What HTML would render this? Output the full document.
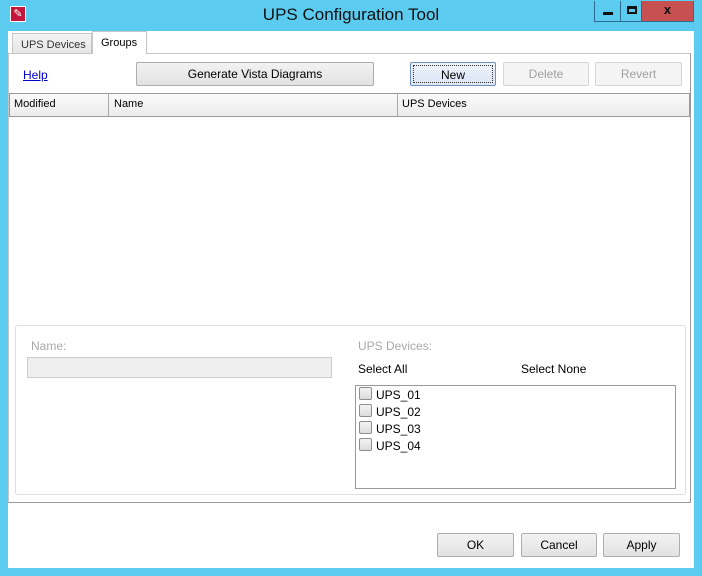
<!DOCTYPE html><html><head><style>
*{box-sizing:border-box;margin:0;padding:0}
body{width:702px;height:576px;background:#5ccbf0;font-family:"Liberation Sans",sans-serif;font-size:12px;color:#000;position:relative;overflow:hidden}
.a{position:absolute}
.btn{position:absolute;border:1px solid #adadad;border-radius:2px;background:linear-gradient(#f2f2f2,#e2e2e2);text-align:center;line-height:22px;font-size:12px}
.dis{color:#a0a0a0;border-color:#d5d5d5;background:#f4f4f4}
.cb{position:absolute;width:13px;height:13px;border:1px solid #8e8e8e;border-radius:2px;background:linear-gradient(#f4f4f4,#dcdcdc)}
</style></head><body>
<div class="a" style="left:10px;top:6px;width:16px;height:16px;background:#c4163a;border:1px solid #fff;color:#fff;font-size:11px;line-height:14px;text-align:center">✎</div>
<div class="a" style="left:0;width:702px;top:5px;text-align:center;font-size:17px;color:#111">UPS Configuration Tool</div>
<div class="a" style="left:594px;top:1px;width:27px;height:21px;border:1px solid #2b6d8e;border-top:none"><div class="a" style="left:8px;top:11px;width:10px;height:3px;background:#111"></div></div>
<div class="a" style="left:620px;top:1px;width:22px;height:21px;border:1px solid #2b6d8e;border-top:none"><div class="a" style="left:6px;top:5px;width:10px;height:8px;border:2px solid #111;border-top-width:3px"></div></div>
<div class="a" style="left:641px;top:1px;width:53px;height:21px;background:#c75050;border:1px solid #2b6d8e;border-top:none;color:#111;font-weight:bold;text-align:center;font-size:13px;line-height:18px">x</div>
<div class="a" style="left:8px;top:31px;width:686px;height:537px;background:#fff"></div>
<div class="a" style="left:12px;top:33px;width:80px;height:21px;border:1px solid #c6c6c6;background:linear-gradient(#f4f4f4,#e6e6e6);font-size:11px;color:#333;padding:5px 0 0 8px">UPS Devices</div>
<div class="a" style="left:8px;top:53px;width:683px;height:450px;border:1px solid #c6c6c6;border-right-color:#999;border-bottom-color:#999"></div>
<div class="a" style="left:92px;top:31px;width:55px;height:23px;border:1px solid #c6c6c6;border-bottom:none;background:#fff;font-size:11px;padding:5px 0 0 8px">Groups</div>
<div class="a" style="left:23px;top:68px;color:#0000cc;text-decoration:underline">Help</div>
<div class="btn" style="left:136px;top:62px;width:238px;height:24px">Generate Vista Diagrams</div>
<div class="btn" style="left:410px;top:62px;width:86px;height:24px;border-color:#6f8fbf;background:linear-gradient(#eef3fb,#dbe5f6)"><div style="position:absolute;inset:2px;border:1px dotted #333;line-height:18px">New</div></div>
<div class="btn dis" style="left:503px;top:62px;width:86px;height:24px">Delete</div>
<div class="btn dis" style="left:595px;top:62px;width:87px;height:24px">Revert</div>
<div class="a" style="left:9px;top:93px;width:681px;height:24px;border:1px solid #999;background:linear-gradient(#fafafa,#ececec);font-size:11px;line-height:21px">
<span class="a" style="left:4px">Modified</span><span class="a" style="left:98px;top:0;height:22px;border-left:1px solid #aaa"></span><span class="a" style="left:104px">Name</span><span class="a" style="left:387px;top:0;height:22px;border-left:1px solid #aaa"></span><span class="a" style="left:392px">UPS Devices</span></div>
<div class="a" style="left:15px;top:325px;width:671px;height:170px;border:1px solid #ddd;border-radius:3px"></div>
<div class="a" style="left:31px;top:339px;color:#a8a8a8">Name:</div>
<div class="a" style="left:27px;top:357px;width:305px;height:21px;border:1px solid #ccc;background:#efefef"></div>
<div class="a" style="left:358px;top:339px;color:#a8a8a8">UPS Devices:</div>
<div class="a" style="left:358px;top:362px">Select All</div>
<div class="a" style="left:521px;top:362px">Select None</div>
<div class="a" style="left:355px;top:385px;width:321px;height:104px;border:1px solid #999"></div>
<div class="cb" style="left:359px;top:387px"></div><div class="a" style="left:376px;top:388px">UPS_01</div>
<div class="cb" style="left:359px;top:404px"></div><div class="a" style="left:376px;top:405px">UPS_02</div>
<div class="cb" style="left:359px;top:421px"></div><div class="a" style="left:376px;top:422px">UPS_03</div>
<div class="cb" style="left:359px;top:438px"></div><div class="a" style="left:376px;top:439px">UPS_04</div>
<div class="btn" style="left:437px;top:533px;width:77px;height:24px">OK</div>
<div class="btn" style="left:521px;top:533px;width:76px;height:24px">Cancel</div>
<div class="btn" style="left:603px;top:533px;width:77px;height:24px">Apply</div>
</body></html>
